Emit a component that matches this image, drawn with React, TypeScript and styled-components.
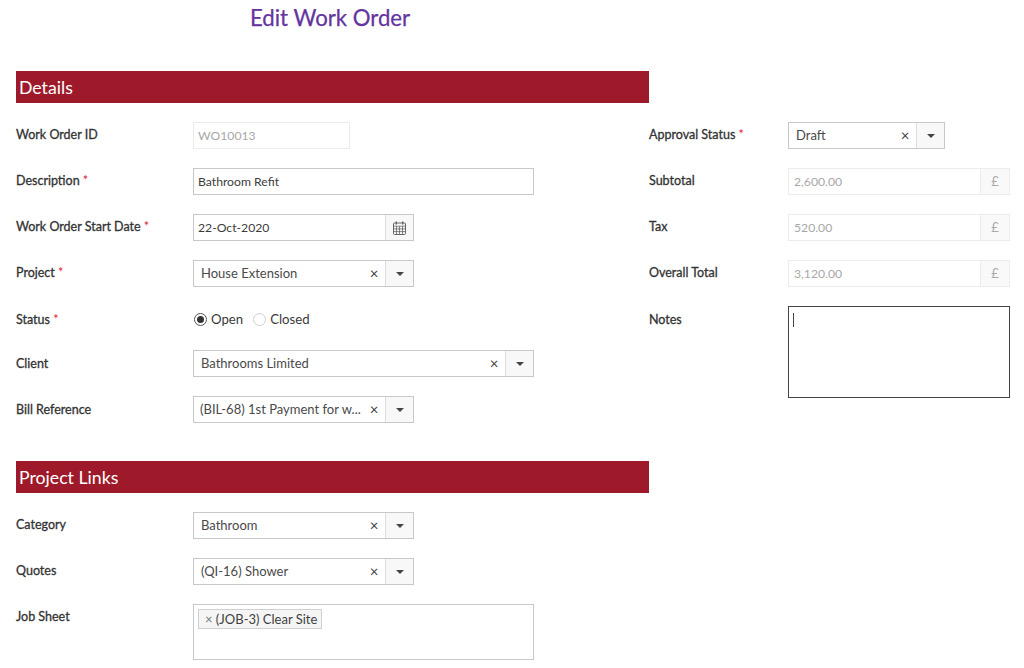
import React from "react";
import styled, { createGlobalStyle } from "styled-components";

const GlobalStyle = createGlobalStyle`
  html, body {
    margin: 0;
    padding: 0;
    background: #fff;
    font-family: Lato, "Liberation Sans", sans-serif;
    color: #3d3d3d;
  }
`;

const CalendarIcon = () => (
  <svg width="13" height="14" viewBox="0 0 13 14" fill="none" stroke="#666" strokeWidth="1">
    <rect x="0.5" y="2" width="12" height="11.5" rx="1" />
    <path d="M0.5 5.2h12M0.5 7.9h12M0.5 10.6h12M3.5 5.2v8.3M6.5 5.2v8.3M9.5 5.2v8.3" strokeWidth="0.8" />
    <path d="M3.3 0.5v3M9.7 0.5v3" strokeWidth="1.4" />
  </svg>
);

const App = () => {
  return (
    <Page>
      <GlobalStyle />
      <Title>Edit Work Order</Title>
      <TopGrid>
        <SectionBar>Details</SectionBar>
        <div />
        <Fields>
          <Row>
            <Label>Work Order ID</Label>
            <ReadOnlyBox $width={157}>WO10013</ReadOnlyBox>
          </Row>
          <Row>
            <Label>
              Description <Req>*</Req>
            </Label>
            <TextBox $width={341}>Bathroom Refit</TextBox>
          </Row>
          <Row>
            <Label>
              Work Order Start Date <Req>*</Req>
            </Label>
            <DateBox>
              <DateValue>22-Oct-2020</DateValue>
              <AddOn>
                <CalendarIcon />
              </AddOn>
            </DateBox>
          </Row>
          <Row>
            <Label>
              Project <Req>*</Req>
            </Label>
            <Select value="House Extension" width={221} />
          </Row>
          <RadioRow>
            <LowLabel>
              Status <Req>*</Req>
            </LowLabel>
            <RadioGroup>
              <RadioDot $checked />
              <RadioText>Open</RadioText>
              <RadioDot />
              <RadioText>Closed</RadioText>
            </RadioGroup>
          </RadioRow>
          <Row>
            <LowLabel>Client</LowLabel>
            <Select value="Bathrooms Limited" width={341} />
          </Row>
          <Row>
            <LowLabel>Bill Reference</LowLabel>
            <Select value="(BIL-68) 1st Payment for w..." width={221} tight />
          </Row>
        </Fields>
        <SideFields>
          <Row>
            <SideLabel>
              Approval Status <Req>*</Req>
            </SideLabel>
            <Select value="Draft" width={157} />
          </Row>
          {[
            ["Subtotal", "2,600.00"],
            ["Tax", "520.00"],
            ["Overall Total", "3,120.00"],
          ].map(([name, amount]) => (
            <Row key={name}>
              <SideLabel>{name}</SideLabel>
              <MoneyBox>
                <MoneyValue>{amount}</MoneyValue>
                <Currency>£</Currency>
              </MoneyBox>
            </Row>
          ))}
          <Row>
            <NotesLabel>Notes</NotesLabel>
            <NotesBox>
              <Caret />
            </NotesBox>
          </Row>
        </SideFields>
      </TopGrid>
      <LinksSection>
        <SectionBar>Project Links</SectionBar>
        <Fields>
          <Row>
            <Label>Category</Label>
            <Select value="Bathroom" width={221} />
          </Row>
          <Row>
            <Label>Quotes</Label>
            <Select value="(QI-16) Shower" width={221} />
          </Row>
          <Row>
            <Label>Job Sheet</Label>
            <MultiBox>
              <Tag>
                <TagX>×</TagX>&nbsp;(JOB-3) Clear Site
              </Tag>
            </MultiBox>
          </Row>
        </Fields>
      </LinksSection>
    </Page>
  );
};

const Select = ({ value, width, tight }: { value: string; width: number; tight?: boolean }) => (
  <SelectBox $width={width}>
    <SelectValue $tight={tight}>{value}</SelectValue>
    <ClearX>×</ClearX>
    <ArrowCell>
      <Arrow />
    </ArrowCell>
  </SelectBox>
);

export default App;

const Page = styled.div`
  width: 1024px;
  height: 668px;
  overflow: hidden;
  padding: 0 14px 0 16px;
  box-sizing: border-box;
`;

const Title = styled.h1`
  margin: 0;
  padding: 4px 0 0 234px;
  height: 71px;
  box-sizing: border-box;
  font-size: 22.2px;
  line-height: 28px;
  font-weight: 400;
  color: #6435a0;
  -webkit-text-stroke: 0.25px #6435a0;
`;

const TopGrid = styled.div`
  display: grid;
  grid-template-columns: 633px 361px;
`;

const SectionBar = styled.div`
  height: 32px;
  width: 633px;
  background: #9e1a2a;
  color: #fff;
  font-size: 17.7px;
  line-height: 33px;
  padding-left: 3px;
  box-sizing: border-box;
`;

const Fields = styled.div`
  padding-top: 19px;
  display: flex;
  flex-direction: column;
`;

const SideFields = styled(Fields)``;

const LinksSection = styled.section`
  margin-top: 19px;
`;

const Row = styled.div`
  display: flex;
  align-items: flex-start;
  margin-bottom: 18px;
  min-height: 28px;
`;

const RadioRow = styled(Row)`
  margin-bottom: 16px;
`;

const Label = styled.div`
  width: 177px;
  flex: none;
  font-size: 12.5px;
  font-weight: 400;
  line-height: 25px;
  color: #333;
  -webkit-text-stroke: 0.3px #333;
`;

const LowLabel = styled(Label)`
  line-height: 27px;
`;

const SideLabel = styled(Label)`
  width: 139px;
`;

const NotesLabel = styled(SideLabel)`
  line-height: 27px;
`;

const Req = styled.span`
  color: #e0182d;
  -webkit-text-stroke: 0;
`;

const TextBox = styled.div<{ $width: number }>`
  width: ${(p) => p.$width}px;
  height: 27px;
  box-sizing: border-box;
  border: 1px solid #c8c8c8;
  padding-left: 4px;
  font-size: 12.2px;
  line-height: 25px;
`;

const ReadOnlyBox = styled(TextBox)`
  border-color: #ececec;
  color: #a8a8a8;
`;

const DateBox = styled.div`
  display: flex;
  width: 221px;
  height: 27px;
  box-sizing: border-box;
  border: 1px solid #c8c8c8;
`;

const DateValue = styled.div`
  flex: 1;
  padding-left: 4px;
  font-size: 12.2px;
  line-height: 25px;
`;

const AddOn = styled.div`
  width: 27px;
  display: flex;
  align-items: center;
  justify-content: center;
  background: #f8f8f8;
  border-left: 1px solid #dcdcdc;
`;

const SelectBox = styled.div<{ $width: number }>`
  display: flex;
  align-items: center;
  width: ${(p) => p.$width}px;
  height: 27px;
  box-sizing: border-box;
  border: 1px solid #c8c8c8;
`;

const SelectValue = styled.div<{ $tight?: boolean }>`
  flex: 1;
  min-width: 0;
  padding-left: ${(p) => (p.$tight ? 6 : 7)}px;
  padding-bottom: 1px;
  font-size: 13px;
  white-space: nowrap;
  color: #4a4a4a;
`;

const ClearX = styled.div`
  width: 20px;
  flex: none;
  margin-right: 1px;
  text-align: center;
  font-size: 15px;
  line-height: 25px;
  color: #444;
`;

const ArrowCell = styled.div`
  width: 27px;
  height: 100%;
  flex: none;
  display: flex;
  align-items: center;
  justify-content: center;
  background: #f8f8f8;
  border-left: 1px solid #dcdcdc;
`;

const Arrow = styled.div`
  width: 0;
  height: 0;
  border-left: 4px solid transparent;
  border-right: 4px solid transparent;
  border-top: 4px solid #444;
`;

const RadioGroup = styled.div`
  display: flex;
  align-items: center;
  height: 26px;
  font-size: 13.2px;
`;

const RadioDot = styled.span<{ $checked?: boolean }>`
  width: 13px;
  height: 13px;
  box-sizing: border-box;
  border-radius: 50%;
  border: 1px solid ${(p) => (p.$checked ? "#555" : "#d0d0d0")};
  margin-left: 1px;
  display: flex;
  align-items: center;
  justify-content: center;
  &::after {
    content: "";
    width: 7px;
    height: 7px;
    border-radius: 50%;
    background: ${(p) => (p.$checked ? "#333" : "transparent")};
  }
`;

const RadioText = styled.span`
  margin: 0 9px 0 4px;
  padding-bottom: 1px;
  color: #3a3a3a;
`;

const MoneyBox = styled.div`
  display: flex;
  width: 222px;
  height: 27px;
  box-sizing: border-box;
  border: 1px solid #ececec;
`;

const MoneyValue = styled.div`
  flex: 1;
  padding-left: 5px;
  font-size: 12.2px;
  line-height: 25px;
  color: #a8a8a8;
`;

const Currency = styled.div`
  width: 28px;
  text-align: center;
  background: #f9f9f9;
  border-left: 1px solid #ececec;
  font-size: 13px;
  line-height: 25px;
  color: #aaa;
`;

const NotesBox = styled.div`
  width: 222px;
  height: 92px;
  box-sizing: border-box;
  border: 1px solid #444;
  padding: 6px 4px;
`;

const Caret = styled.div`
  width: 1px;
  height: 14px;
  background: #444;
`;

const MultiBox = styled.div`
  display: flex;
  align-items: flex-start;
  width: 341px;
  height: 56px;
  box-sizing: border-box;
  border: 1px solid #c8c8c8;
  padding: 4px;
`;

const Tag = styled.span`
  height: 20px;
  box-sizing: border-box;
  padding: 0 4px 0 6px;
  border: 1px solid #d0d0d0;
  background: #f5f5f5;
  font-size: 13px;
  line-height: 18px;
  color: #3f3f3f;
`;

const TagX = styled.span`
  color: #777;
`;
